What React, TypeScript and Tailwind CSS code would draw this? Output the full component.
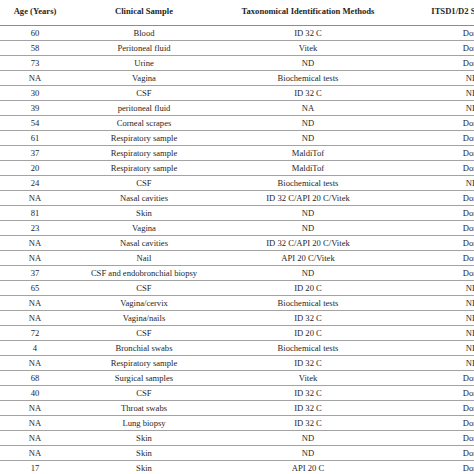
const rows: [string, string, string, string][] = [
  ["60", "Blood", "ID 32 C", "Done"],
  ["58", "Peritoneal fluid", "Vitek", "Done"],
  ["73", "Urine", "ND", "Done"],
  ["NA", "Vagina", "Biochemical tests", "ND"],
  ["30", "CSF", "ID 32 C", "ND"],
  ["39", "peritoneal fluid", "NA", "ND"],
  ["54", "Corneal scrapes", "ND", "Done"],
  ["61", "Respiratory sample", "ND", "Done"],
  ["37", "Respiratory sample", "MaldiTof", "Done"],
  ["20", "Respiratory sample", "MaldiTof", "Done"],
  ["24", "CSF", "Biochemical tests", "ND"],
  ["NA", "Nasal cavities", "ID 32 C/API 20 C/Vitek", "Done"],
  ["81", "Skin", "ND", "Done"],
  ["23", "Vagina", "ND", "Done"],
  ["NA", "Nasal cavities", "ID 32 C/API 20 C/Vitek", "Done"],
  ["NA", "Nail", "API 20 C/Vitek", "Done"],
  ["37", "CSF and endobronchial biopsy", "ND", "Done"],
  ["65", "CSF", "ID 20 C", "ND"],
  ["NA", "Vagina/cervix", "Biochemical tests", "ND"],
  ["NA", "Vagina/nails", "ID 32 C", "ND"],
  ["72", "CSF", "ID 20 C", "ND"],
  ["4", "Bronchial swabs", "Biochemical tests", "ND"],
  ["NA", "Respiratory sample", "ID 32 C", "ND"],
  ["68", "Surgical samples", "Vitek", "Done"],
  ["40", "CSF", "ID 32 C", "Done"],
  ["NA", "Throat swabs", "ID 32 C", "Done"],
  ["NA", "Lung biopsy", "ID 32 C", "Done"],
  ["NA", "Skin", "ND", "Done"],
  ["NA", "Skin", "ND", "Done"],
  ["17", "Skin", "API 20 C", "Done"],
];

const headers = ["Age (Years)", "Clinical Sample", "Taxonomical Identification Methods", "ITSD1/D2 Sequencing"];

const cols = "grid grid-cols-[70px_148px_180px_148px]";

export default function App() {
  return (
    <div className="w-[474px] h-[474px] overflow-hidden bg-white text-[#262626] font-['Liberation_Serif',serif] text-[8.6px] leading-none">
      <div className="w-[546px]">
        {/* Header */}
        <div className={`${cols} h-[26px] items-center border-b-[1.5px] border-[#8c8c8c] font-bold`}>
          {headers.map((h) => (
            <div key={h} className="text-center whitespace-nowrap pb-[2px]">
              {h}
            </div>
          ))}
        </div>

        {/* Body */}
        {rows.map((r, i) => (
          <div key={i} className={`${cols} h-[15px] items-center border-b-[1.5px] border-[#a3a3a3]`}>
            {r.map((c, j) => (
              <div key={j} className="text-center whitespace-nowrap">
                {c}
              </div>
            ))}
          </div>
        ))}
      </div>
    </div>
  );
}
